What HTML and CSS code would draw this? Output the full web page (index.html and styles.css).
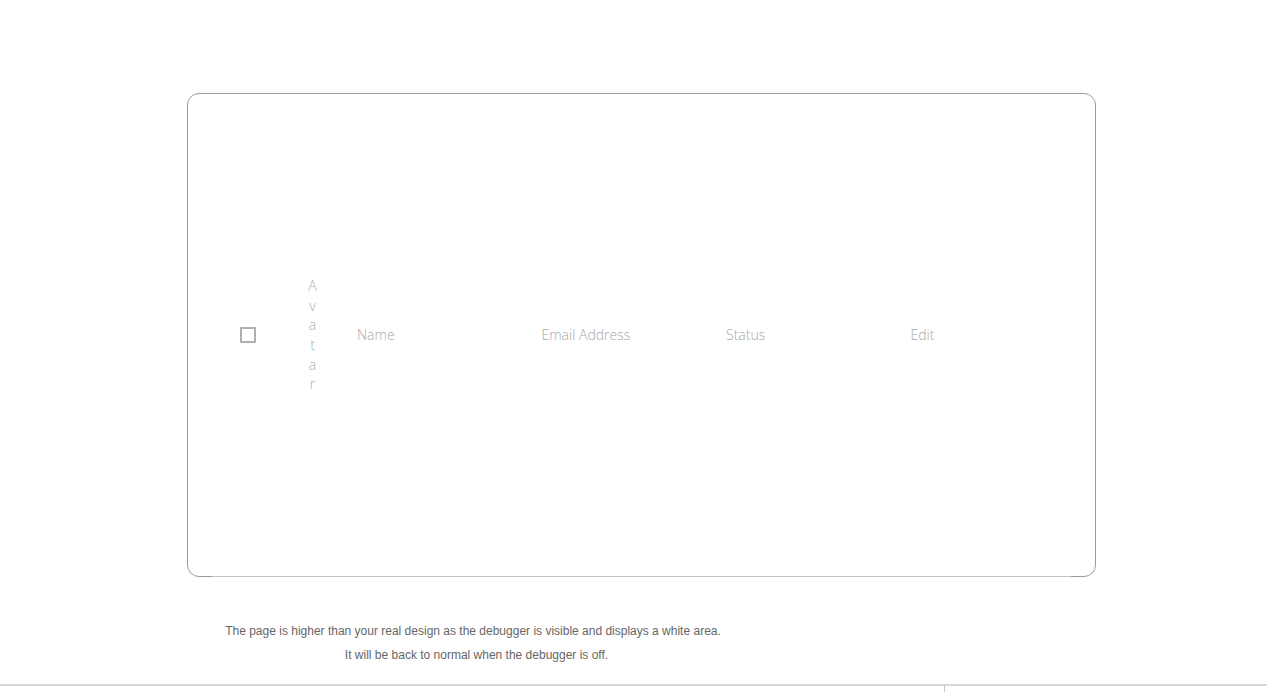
FILE: index.html
```html
<!DOCTYPE html>
<html>
<head>
<meta charset="utf-8">
<link rel="stylesheet" href="styles.css">
</head>
<body>
<div class="page">
  <div class="card">
    <div class="table-head">
      <div class="cell cell-check"><span class="checkbox"></span></div>
      <div class="cell cell-avatar">Avatar</div>
      <div class="cell cell-col">Name</div>
      <div class="cell cell-col">Email Address</div>
      <div class="cell cell-col">Status</div>
      <div class="cell cell-col">Edit</div>
    </div>
    <div class="card-bottom-line"></div>
  </div>
  <div class="notice">
    <p>The page is higher than your real design as the debugger is visible and displays a white area.</p>
    <p class="notice-second">It will be back to normal when the debugger is off.</p>
  </div>
  <div class="debug-bar">
    <div class="debug-tick"></div>
  </div>
</div>
</body>
</html>
```

FILE: styles.css
```css
html, body {
  margin: 0;
  padding: 0;
  background: #ffffff;
}

.page {
  width: 1267px;
  height: 692px;
  overflow: hidden;
  padding-top: 93px;
  box-sizing: border-box;
}

.card {
  position: relative;
  margin-left: 187px;
  width: 909px;
  height: 484px;
  box-sizing: border-box;
  border: 1px solid #9a9a9a;
  border-radius: 12px;
  display: flex;
  align-items: center;
}

.card-bottom-line {
  position: absolute;
  left: 24px;
  right: 24px;
  bottom: -1px;
  height: 1px;
  background: #c4c4c4;
}

.table-head {
  display: flex;
  align-items: center;
  padding-left: 52px;
  font-family: "Open Sans", sans-serif;
  font-size: 14px;
  font-weight: 300;
  color: #a8a8a8;
  margin-top: -1px;
}

.cell-check {
  width: 16px;
  height: 16px;
  margin-right: 52px;
  margin-top: 1px;
}

.checkbox {
  display: block;
  width: 16px;
  height: 16px;
  box-sizing: border-box;
  border: 2px solid #b0b0b0;
  border-radius: 1px;
  background: #fff;
}

.cell-avatar {
  width: 9px;
  word-break: break-all;
  line-height: 19.6px;
  font-size: 14px;
  color: #a0afbe;
  margin-right: 40px;
  text-align: center;
  margin-top: 1px;
}

.cell-col {
  width: 184.5px;
  white-space: nowrap;
}

.notice {
  width: 946px;
  margin-top: 42px;
  text-align: center;
  font-family: "Liberation Sans", Arial, sans-serif;
  font-size: 12px;
  color: #666666;
}

.notice p {
  margin: 0;
  line-height: 24px;
}

.notice .notice-second {
  padding-left: 7px;
}

.debug-bar {
  margin-top: 17px;
  height: 2px;
  background: #d8d8d8;
  position: relative;
}

.debug-tick {
  position: absolute;
  left: 944px;
  top: 2px;
  width: 1px;
  height: 8px;
  background: #c8c8c8;
}
```
